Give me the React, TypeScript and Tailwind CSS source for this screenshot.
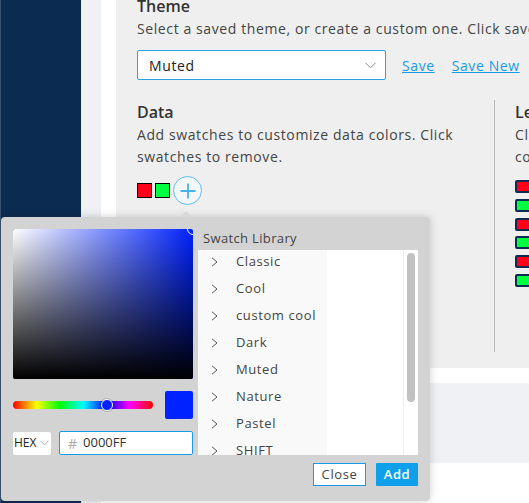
import React from "react";

const libraries = ["Classic", "Cool", "custom cool", "Dark", "Muted", "Nature", "Pastel", "SHIFT"];
const legendSwatches = ["red", "green", "red", "green", "red", "green"];

function Chevron({ className }: { className?: string }) {
  return (
    <svg className={className} width="11" height="7" viewBox="0 0 11 7" fill="none">
      <path d="M0.5 0.8 L5.5 5.8 L10.5 0.8" stroke="currentColor" strokeWidth="1" />
    </svg>
  );
}

function ChevronRight() {
  return (
    <svg width="7" height="10" viewBox="0 0 7 10" fill="none" className="text-[#555]">
      <path d="M1 0.8 L6 5 L1 9.2" stroke="currentColor" strokeWidth="1" />
    </svg>
  );
}

function ColorPopover() {
  return (
    <div className="absolute left-[1px] top-[217px] h-[284px] w-[429px] rounded-[4px] bg-[#d3d3d3] shadow-[0_0_10px_rgba(0,0,0,0.18)]">
      {/* arrow */}
      <div className="absolute -top-[6px] left-[179px] h-0 w-0 border-x-[6px] border-b-[6px] border-x-transparent border-b-[#d8d8d8]" />
      <div className="flex pl-[12px] pt-[12px]">
        <div className="w-[180px]">
          <div className="relative h-[150px] w-[180px] overflow-hidden rounded-[2px] bg-[#0022ff]">
            <div className="absolute inset-0 bg-[linear-gradient(to_right,#fff,rgba(255,255,255,0))]" />
            <div className="absolute inset-0 bg-[linear-gradient(to_top,#000,rgba(0,0,0,0))]" />
            <div className="absolute -right-[6px] -top-[6px] h-[12px] w-[12px] rounded-full border-[1.5px] border-white" />
          </div>
          <div className="mt-[12px] flex items-center">
            <div className="relative h-[8px] w-[140px] rounded-full bg-[linear-gradient(to_right,#f00,#ff0,#0f0,#0ff,#00f,#f0f,#f00)]">
              <div className="absolute left-[88px] top-[-2px] h-[12px] w-[12px] rounded-full border-[1.5px] border-white bg-[#0022ff] shadow-[0_0_0_1px_rgba(0,0,0,0.15)]" />
            </div>
            <div className="ml-[12px] h-[28px] w-[28px] rounded-[2px] bg-[#0022ff]" />
          </div>
          <div className="mt-[12px] flex items-center tracking-normal">
            <div className="flex h-[23px] w-[38px] items-center justify-between rounded-[2px] bg-white pl-[1px] pr-[2px] text-[12px] text-[#222]">
              <span>HEX</span>
              <Chevron className="h-[6px] w-[9px] text-[#999]" />
            </div>
            <div className="ml-[8px] flex h-[24px] w-[134px] items-center rounded-[2px] border border-[#1a9be8] bg-white pl-[8px] text-[13px]">
              <span className="text-[14px] text-[#aaa]">#</span>
              <span className="ml-[6px] text-[#333]">0000FF</span>
            </div>
          </div>
        </div>
        <div className="ml-[5px] w-[220px]">
          <div className="pl-[5px] text-[13px] leading-[18px] tracking-[0.35px] text-[#444]">Swatch Library</div>
          <div className="mt-[3px] flex h-[205px] overflow-hidden bg-white">
            <div className="w-[129px] bg-[#f9f9f9]">
              <div className="-mt-[1.5px]">
                {libraries.map((name) => (
                  <div key={name} className="flex h-[27px] items-center pl-[13px] text-[13px] text-[#444]">
                    <ChevronRight />
                    <span className="ml-[18px] whitespace-nowrap">{name}</span>
                  </div>
                ))}
              </div>
            </div>
            <div className="flex-1" />
            <div className="w-[15px] border-l border-[#eee] pl-[3px] pt-[3px]">
              <div className="h-[149px] w-[8px] rounded-full bg-[#c1c1c1]" />
            </div>
          </div>
          <div className="mt-[8px] flex justify-end gap-[10px]">
            <button className="h-[23px] w-[53px] border border-[#1a9be8] bg-white text-[13px] text-[#444]">Close</button>
            <button className="h-[23px] w-[42px] rounded-[1px] bg-[#0ea0ea] text-[13px] font-semibold text-white">Add</button>
          </div>
        </div>
      </div>
    </div>
  );
}

export default function App() {
  return (
    <div className="relative flex h-[503px] w-[529px] overflow-hidden bg-white font-['Open_Sans',sans-serif] tracking-[0.6px]">
      <aside className="h-full w-[81px] shrink-0 border-l border-[#3b5270] bg-[#0c2b50]" />
      <div className="h-full w-[20px] shrink-0 bg-[#f0f1f5]" />
      <div className="h-full w-[15px] shrink-0 bg-white" />
      <main className="flex min-w-0 flex-1 flex-col">
        <section className="h-[368px] overflow-hidden bg-[#efefef] pl-[21px]">
          <div className="-mt-[6px] w-[600px]">
            <h2 className="text-[16px] font-semibold leading-[24px] tracking-normal text-[#333]">Theme</h2>
            <p className="whitespace-nowrap text-[14px] leading-[22px] text-[#444]">
              Select a saved theme, or create a custom one. Click save to update.
            </p>
            <div className="mt-[10px] flex items-center">
              <div className="flex h-[30px] w-[249px] items-center justify-between rounded-[2px] border border-[#29a3e8] bg-white pl-[11px] pr-[9px] text-[14px] text-[#222]">
                <span>Muted</span>
                <Chevron className="text-[#888]" />
              </div>
              <a className="ml-[16px] text-[14px] text-[#1a9be8] underline">Save</a>
              <a className="ml-[17px] text-[14px] text-[#1a9be8] underline">Save New</a>
            </div>
            <div className="mt-[20px] flex">
              <div className="h-[252px] w-[358px] shrink-0 border-r border-[#bbb]">
                <h3 className="text-[16px] font-semibold leading-[24px] tracking-normal text-[#333]">Data</h3>
                <p className="whitespace-nowrap text-[14px] leading-[22px] text-[#444]">
                  Add swatches to customize data colors. Click
                  <br />
                  swatches to remove.
                </p>
                <div className="mt-[8px] flex items-center">
                  <div className="h-[15px] w-[15px] border border-black bg-[#ff001a]" />
                  <div className="ml-[3px] h-[15px] w-[15px] border border-black bg-[#00ff41]" />
                  <div className="ml-[3px] flex h-[29px] w-[29px] items-center justify-center rounded-full border-[1.5px] border-[#5bbef3] bg-[#f3f7fa] text-[#47b2ee]">
                    <svg width="18" height="18" viewBox="0 0 18 18" fill="none">
                      <path d="M9 1.5 V16.5 M1.5 9 H16.5" stroke="currentColor" strokeWidth="1.8" />
                    </svg>
                  </div>
                </div>
              </div>
              <div className="shrink-0 pl-[20px]">
                <h3 className="text-[16px] font-semibold leading-[24px] tracking-normal text-[#333]">Legend</h3>
                <p className="whitespace-nowrap text-[14px] leading-[22px] text-[#444]">
                  Click swatches to change legend
                  <br />
                  colors.
                </p>
                <div className="mt-[12px] flex flex-col gap-[5.8px]">
                  {legendSwatches.map((c, i) => (
                    <div
                      key={i}
                      className={
                        c === "red"
                          ? "h-[13px] w-[40px] rounded-[2px] border-2 border-[#0c2b50] bg-[#ff001a]"
                          : "h-[13px] w-[40px] rounded-[2px] border-2 border-[#0c2b50] bg-[#00ff41]"
                      }
                    />
                  ))}
                </div>
              </div>
            </div>
          </div>
        </section>
        <div className="h-[15px] bg-white" />
        <div className="h-[80px] bg-[#f0f1f5]" />
        <div className="flex-1 bg-white" />
      </main>
      <ColorPopover />
    </div>
  );
}
